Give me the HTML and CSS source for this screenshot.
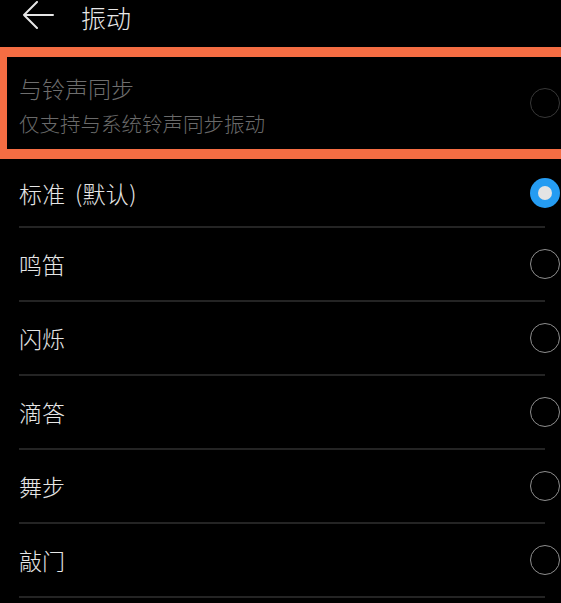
FILE: index.html
```html
<!DOCTYPE html>
<html lang="zh-CN">
<head>
<meta charset="utf-8">
<title>振动</title>
<link rel="stylesheet" href="styles.css">
</head>
<body>
<div class="page">
  <header class="header">
    <svg class="back" width="32" height="28" viewBox="0 0 32 28" fill="none" stroke="#e6e6e6" stroke-width="2" stroke-linecap="round" stroke-linejoin="round">
      <path d="M31 14 H2 M15 1 L2 14 L15 27"/>
    </svg>
    <h1 class="title">振动</h1>
  </header>

  <section class="sync">
    <div class="sync-text">
      <div class="sync-title">与铃声同步</div>
      <div class="sync-sub">仅支持与系统铃声同步振动</div>
    </div>
    <span class="radio radio-disabled"></span>
  </section>

  <ul class="list">
    <li class="row row-first"><span class="label label-wide">标准 (默认)</span><span class="radio radio-on"><span class="dot"></span></span></li>
    <li class="row"><span class="label">鸣笛</span><span class="radio"></span></li>
    <li class="row"><span class="label">闪烁</span><span class="radio"></span></li>
    <li class="row"><span class="label">滴答</span><span class="radio"></span></li>
    <li class="row"><span class="label">舞步</span><span class="radio"></span></li>
    <li class="row"><span class="label">敲门</span><span class="radio"></span></li>
  </ul>
</div>
</body>
</html>
```

FILE: styles.css
```css
html, body {
  margin: 0;
  padding: 0;
  background: #000;
}
body {
  width: 561px;
  height: 603px;
  overflow: hidden;
  font-family: "Noto Sans CJK SC", "Noto Sans", sans-serif;
  font-weight: 300;
  color: #e6e6e6;
}
.page {
  width: 561px;
}
.header {
  height: 30px;
  margin-bottom: 17px;
  display: flex;
  align-items: center;
  padding-left: 22px;
}
.back {
  display: block;
  margin-right: 27px;
}
.title {
  margin: 0;
  font-size: 25px;
  font-weight: 300;
  line-height: 30px;
  color: #e8e8e8;
  padding-top: 3px;
}
.sync {
  border: 10px solid #f56d43;
  border-left-width: 7px;
  border-right-width: 7px;
  margin-right: -7px;
  height: 92px;
  box-sizing: content-box;
  display: flex;
  align-items: center;
  justify-content: space-between;
  padding: 0 1px 0 12px;
}
.sync-text {
  align-self: flex-start;
  padding-top: 16px;
}
.sync-title {
  font-size: 23px;
  line-height: 30px;
  color: #6e6e6e;
  margin-bottom: 5px;
}
.sync-sub {
  font-size: 20.5px;
  line-height: 30px;
  color: #6a6a6a;
}
.list {
  list-style: none;
  margin: 0;
  padding: 0;
}
.row {
  margin: 0 16px 0 19px;
  height: 74px;
  box-sizing: border-box;
  border-bottom: 2px solid #242424;
  display: flex;
  align-items: center;
  justify-content: space-between;
}
.row-first {
  height: 69px;
}
.label {
  font-size: 23px;
  line-height: 30px;
  color: #e6e6e6;
}
.label-wide {
  word-spacing: 4px;
  letter-spacing: 0.3px;
}
.radio {
  width: 30px;
  height: 30px;
  box-sizing: border-box;
  border-radius: 50%;
  border: 1.5px solid #8e8e8e;
  flex: none;
  margin-right: -15px;
  display: flex;
  align-items: center;
  justify-content: center;
}
.sync .radio {
  margin-right: 0;
  border-color: #383838;
}
.radio-on {
  border: none;
  background: #259cf2;
}
.dot {
  width: 14px;
  height: 14px;
  border-radius: 50%;
  background: #e4e4e4;
}
```
